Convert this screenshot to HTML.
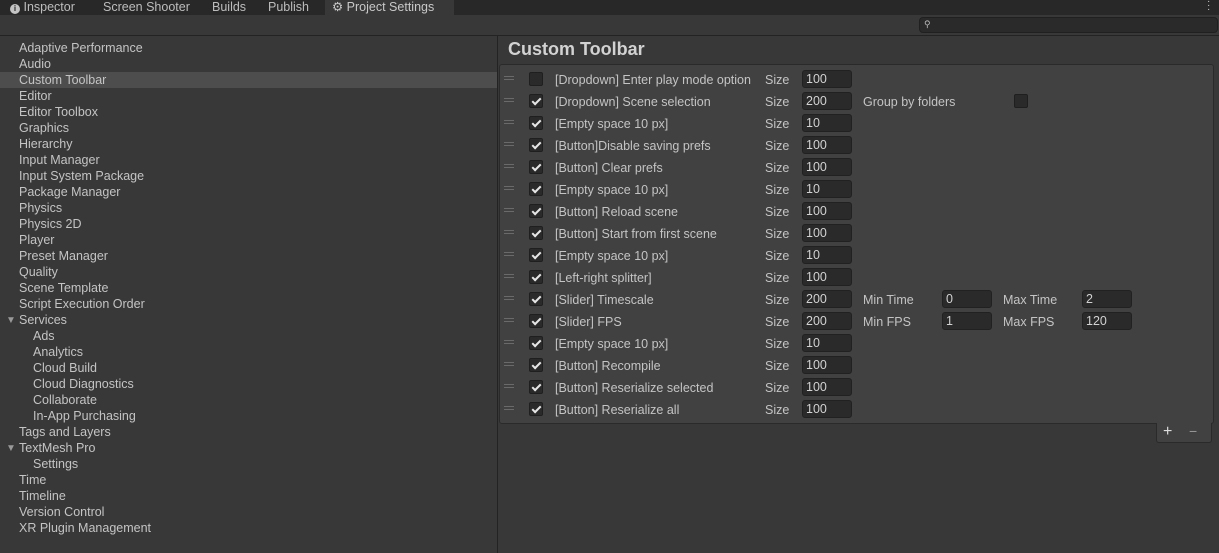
<!DOCTYPE html>
<html><head><style>
*{margin:0;padding:0;box-sizing:border-box}
body{width:1219px;height:553px;background:#383838;font-family:"Liberation Sans",sans-serif;font-size:12.5px;color:#c4c4c4;position:relative;overflow:hidden}
.a{position:absolute;white-space:nowrap}
.tabs{left:0;top:0;width:1219px;height:15px;background:#282828}
.tab{position:absolute;top:0;height:15px;line-height:14px;font-size:12.5px;color:#bdbdbd}
.si{position:absolute;left:19px;height:16px;line-height:16px}
.fld{position:absolute;width:50px;height:18px;background:#2a2a2a;border:1px solid #212121;border-radius:3px;color:#d2d2d2;padding-left:3px;line-height:17px}
.cb{position:absolute;width:14px;height:14px;background:#2a2a2a;border:1px solid #1f1f1f;border-radius:2px}
.cb.on::after{content:"";position:absolute;left:4px;top:1px;width:3px;height:7px;border:solid #e6e6e6;border-width:0 2px 2px 0;transform:rotate(45deg)}
.hb{position:absolute;left:504px;width:10px;height:4px;border-top:1px solid #6a6a6a;border-bottom:1px solid #6a6a6a}
</style></head><body>
<div class="a tabs"></div>
<div class="a" style="left:325px;top:0;width:129px;height:15px;background:#383838"></div>
<div class="tab" style="left:10px"><span style="display:inline-block;width:10px;height:10px;border-radius:50%;background:#c4c4c4;color:#282828;font-size:8px;line-height:10px;text-align:center;font-weight:bold;vertical-align:0px">i</span> Inspector</div>
<div class="tab" style="left:103px">Screen Shooter</div>
<div class="tab" style="left:212px">Builds</div>
<div class="tab" style="left:268px">Publish</div>
<div class="tab" style="left:332px;color:#c8c8c8">⚙ Project Settings</div>
<div class="a" style="left:1207px;top:0;color:#ccc;font-size:10px;line-height:4px;width:3px">·<br>·<br>·</div>
<div class="a" style="left:0;top:35px;width:1219px;height:1px;background:#232323"></div>
<div class="a" style="left:919px;top:17px;width:299px;height:16px;background:#2a2a2a;border:1px solid #202020;border-radius:4px"></div>
<div class="a" style="left:924px;top:19px;font-size:9px;color:#bbb">⚲</div>
<div class="a" style="left:497px;top:36px;width:1px;height:517px;background:#232323"></div>
<div class="a" style="left:0;top:72px;width:497px;height:16px;background:#4d4d4d"></div>
<div class="si" style="top:40px">Adaptive Performance</div>
<div class="si" style="top:56px">Audio</div>
<div class="si" style="top:72px">Custom Toolbar</div>
<div class="si" style="top:88px">Editor</div>
<div class="si" style="top:104px">Editor Toolbox</div>
<div class="si" style="top:120px">Graphics</div>
<div class="si" style="top:136px">Hierarchy</div>
<div class="si" style="top:152px">Input Manager</div>
<div class="si" style="top:168px">Input System Package</div>
<div class="si" style="top:184px">Package Manager</div>
<div class="si" style="top:200px">Physics</div>
<div class="si" style="top:216px">Physics 2D</div>
<div class="si" style="top:232px">Player</div>
<div class="si" style="top:248px">Preset Manager</div>
<div class="si" style="top:264px">Quality</div>
<div class="si" style="top:280px">Scene Template</div>
<div class="si" style="top:296px">Script Execution Order</div>
<div class="si" style="top:312px">Services</div>
<div class="a" style="left:6px;top:313px;line-height:16px;font-size:10px;color:#999">▼</div>
<div class="si" style="top:328px;left:33px">Ads</div>
<div class="si" style="top:344px;left:33px">Analytics</div>
<div class="si" style="top:360px;left:33px">Cloud Build</div>
<div class="si" style="top:376px;left:33px">Cloud Diagnostics</div>
<div class="si" style="top:392px;left:33px">Collaborate</div>
<div class="si" style="top:408px;left:33px">In-App Purchasing</div>
<div class="si" style="top:424px">Tags and Layers</div>
<div class="si" style="top:440px">TextMesh Pro</div>
<div class="a" style="left:6px;top:441px;line-height:16px;font-size:10px;color:#999">▼</div>
<div class="si" style="top:456px;left:33px">Settings</div>
<div class="si" style="top:472px">Time</div>
<div class="si" style="top:488px">Timeline</div>
<div class="si" style="top:504px">Version Control</div>
<div class="si" style="top:520px">XR Plugin Management</div>
<div class="a" style="left:508px;top:39px;font-size:18px;font-weight:bold;color:#d2d2d2">Custom Toolbar</div>
<div class="a" style="left:499px;top:64px;width:715px;height:360px;background:#414141;border:1px solid #2a2a2a;border-radius:3px"></div>
<div class="a" style="left:1156px;top:423px;width:56px;height:20px;background:#414141;border:1px solid #2a2a2a;border-top:none;border-radius:0 0 3px 3px"></div>
<div class="a" style="left:1163px;top:423px;font-size:16px;color:#ddd">+</div>
<div class="a" style="left:1189px;top:423px;font-size:14px;color:#999">−</div>
<div id="rows"></div>
<script>
var R=[["[Dropdown] Enter play mode option","100",0],["[Dropdown] Scene selection","200",1],["[Empty space 10 px]","10",1],["[Button]Disable saving prefs","100",1],["[Button] Clear prefs","100",1],["[Empty space 10 px]","10",1],["[Button] Reload scene","100",1],["[Button] Start from first scene","100",1],["[Empty space 10 px]","10",1],["[Left-right splitter]","100",1],["[Slider] Timescale","200",1],["[Slider] FPS","200",1],["[Empty space 10 px]","10",1],["[Button] Recompile","100",1],["[Button] Reserialize selected","100",1],["[Button] Reserialize all","100",1]];
var h="";
R.forEach(function(r,i){var t=68+22*i,c=t+11;
h+='<div class="hb" style="top:'+(c-3)+'px"></div>';
h+='<div class="cb'+(r[2]?' on':'')+'" style="left:529px;top:'+(c-7)+'px"></div>';
h+='<div class="a" style="left:555px;top:'+(c-7)+'px;line-height:16px">'+r[0]+'</div>';
h+='<div class="a" style="left:765px;top:'+(c-7)+'px;line-height:16px">Size</div>';
h+='<div class="fld" style="left:802px;top:'+(c-9)+'px">'+r[1]+'</div>';
});
function ex(i,l1,v1,l2,v2){var c=68+22*i+11;
h+='<div class="a" style="left:863px;top:'+(c-7)+'px;line-height:16px">'+l1+'</div><div class="fld" style="left:942px;top:'+(c-9)+'px">'+v1+'</div><div class="a" style="left:1003px;top:'+(c-7)+'px;line-height:16px">'+l2+'</div><div class="fld" style="left:1082px;top:'+(c-9)+'px">'+v2+'</div>';}
ex(10,"Min Time","0","Max Time","2");ex(11,"Min FPS","1","Max FPS","120");
h+='<div class="a" style="left:863px;top:94px;line-height:16px">Group by folders</div><div class="cb" style="left:1014px;top:94px"></div>';
document.getElementById("rows").innerHTML=h;
</script>
</body></html>
